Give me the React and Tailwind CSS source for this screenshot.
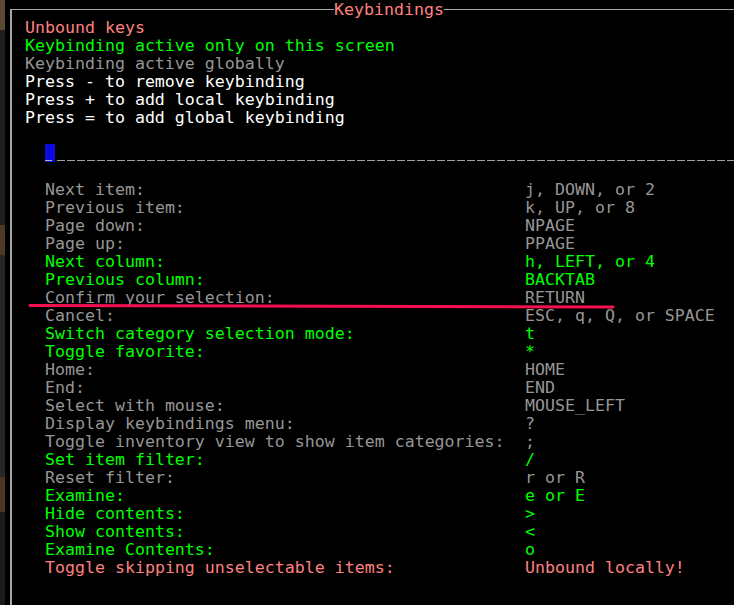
const GRAY = "text-[#969696]";
const GREEN = "text-[#00ff00]";
const PINK = "text-[#ff8080]";
const WHITE = "text-white";

const legend = [
  { text: "Unbound keys", cls: PINK },
  { text: "Keybinding active only on this screen", cls: GREEN },
  { text: "Keybinding active globally", cls: GRAY },
  { text: "Press - to remove keybinding", cls: WHITE },
  { text: "Press + to add local keybinding", cls: WHITE },
  { text: "Press = to add global keybinding", cls: WHITE },
];

const bindings = [
  ["Next item:", "j, DOWN, or 2", GRAY],
  ["Previous item:", "k, UP, or 8", GRAY],
  ["Page down:", "NPAGE", GRAY],
  ["Page up:", "PPAGE", GRAY],
  ["Next column:", "h, LEFT, or 4", GREEN],
  ["Previous column:", "BACKTAB", GREEN],
  ["Confirm your selection:", "RETURN", GRAY],
  ["Cancel:", "ESC, q, Q, or SPACE", GRAY],
  ["Switch category selection mode:", "t", GREEN],
  ["Toggle favorite:", "*", GREEN],
  ["Home:", "HOME", GRAY],
  ["End:", "END", GRAY],
  ["Select with mouse:", "MOUSE_LEFT", GRAY],
  ["Display keybindings menu:", "?", GRAY],
  ["Toggle inventory view to show item categories:", ";", GRAY],
  ["Set item filter:", "/", GREEN],
  ["Reset filter:", "r or R", GRAY],
  ["Examine:", "e or E", GREEN],
  ["Hide contents:", ">", GREEN],
  ["Show contents:", "<", GREEN],
  ["Examine Contents:", "o", GREEN],
  ["Toggle skipping unselectable items:", "Unbound locally!", PINK],
];

function SideStrip() {
  return (
    <div className="flex w-[5px] flex-col">
      <div className="h-[30px] bg-[#5a4a36]" />
      <div className="h-[195px] bg-[#1e1e1e]" />
      <div className="h-[30px] bg-[#4b3a2a]" />
      <div className="h-[222px] bg-[#262626]" />
      <div className="h-[35px] bg-[#4a3526]" />
      <div className="flex-1 bg-[#1b1b1b]" />
    </div>
  );
}

export default function App() {
  return (
    <div
      className="relative flex h-[605px] w-[734px] overflow-hidden bg-black text-[16.6px] leading-[18px] whitespace-pre"
      style={{ fontFamily: '"DejaVu Sans Mono", "Liberation Mono", monospace' }}
    >
      <SideStrip />
      <div className="flex-1 bg-black">
        <div className="ml-[5px] mt-[9px] h-[600px] border-l-2 border-t border-[#a8a8a8]">
          <div className="-mt-[9px] h-[18px] pl-[322px]">
            <span className={`bg-black ${PINK}`}>Keybindings</span>
          </div>

          <div className="pl-[13px]">
            {legend.map((l) => (
              <div key={l.text} className={`h-[18px] ${l.cls}`}>
                {l.text}
              </div>
            ))}
          </div>

          <div className="h-[18px]" />

          <div className="-mt-px flex h-[18px] items-end pl-[33px]">
            <div className="flex h-[18px] w-[10px] items-end bg-[#0b0be0] pb-[1px]">
              <div className="h-px w-[7px] bg-[#b0b0b0]" />
            </div>
            <div className="mb-[1px] h-px flex-1 bg-[repeating-linear-gradient(90deg,transparent_0_2px,#a0a0a0_2px_10px)]" />
          </div>

          <div className="h-[19px]" />

          <div className="pl-[33px]">
            {bindings.map(([label, key, cls]) => (
              <div key={label} className={`flex h-[18px] ${cls}`}>
                <span className="w-[480px]">{label}</span>
                <span>{key}</span>
              </div>
            ))}
          </div>
        </div>
      </div>

      <svg className="pointer-events-none absolute left-0 top-0" width="734" height="605">
        <line x1="30" y1="305.5" x2="613" y2="307" stroke="#f7104f" strokeWidth="3" strokeLinecap="round" />
      </svg>
    </div>
  );
}
